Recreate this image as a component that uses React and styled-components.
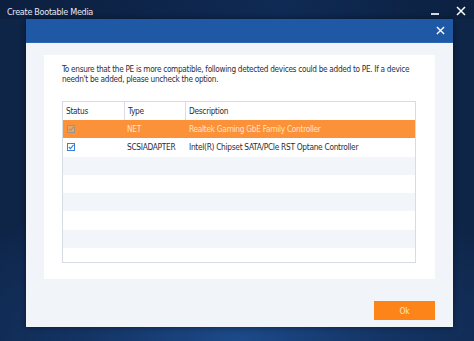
import React from 'react';
import styled, { createGlobalStyle } from 'styled-components';

const GlobalStyle = createGlobalStyle`
  html, body {
    margin: 0;
    padding: 0;
    background: #0e2446;
  }
  body {
    font-family: "DejaVu Sans Condensed", "DejaVu Sans", "Liberation Sans", sans-serif;
    font-stretch: condensed;
    letter-spacing: -0.3px;
  }
`;

const devices = [
  { type: 'NET', desc: 'Realtek Gaming GbE Family Controller', selected: true },
  { type: 'SCSIADAPTER', desc: 'Intel(R) Chipset SATA/PCIe RST Optane Controller' },
];

const EMPTY_ROWS = 6;

function CheckIcon({ muted }) {
  const c = muted ? '#a8927c' : '#3a7fd8';
  return (
    <svg width="8" height="8" viewBox="0 0 8 8">
      <rect x="0.5" y="0.5" width="7" height="7" fill={muted ? '#e9a467' : 'none'} stroke={c} strokeWidth="1" />
      <path d="M1.8 4 L3.4 5.6 L6.6 1.8" fill="none" stroke={c} strokeWidth="1.1" />
    </svg>
  );
}

function CloseIcon({ size = 10 }) {
  return (
    <svg width={size} height={size} viewBox="0 0 10 10">
      <path d="M1 1 L9 9 M9 1 L1 9" stroke="#fff" strokeWidth="1.5" />
    </svg>
  );
}

function App() {
  return (
    <>
      <GlobalStyle />
      <Screen>
        <TitleBar>
          <Title>Create Bootable Media</Title>
          <WinButtons>
            <Minimize />
            <CloseIcon size={10} />
          </WinButtons>
        </TitleBar>
        <Stage>
          <Dialog>
            <DialogHeader>
              <CloseIcon size={9} />
            </DialogHeader>
            <DialogBody>
              <Panel>
                <Notice>
                  To ensure that the PE is more compatible, following detected devices could be added to PE. If a device
                  <br />
                  needn't be added, please uncheck the option.
                </Notice>
                <Table>
                  <HeadRow>
                    <HeadCell>Status</HeadCell>
                    <HeadCell>Type</HeadCell>
                    <HeadCell $last>Description</HeadCell>
                  </HeadRow>
                  {devices.map((d, i) => (
                    <Row key={d.type} $selected={d.selected} $stripe={i % 2 === 0}>
                      <Cell><CheckIcon muted={d.selected} /></Cell>
                      <Cell $pad={2}>{d.type}</Cell>
                      <Cell>{d.desc}</Cell>
                    </Row>
                  ))}
                  {Array.from({ length: EMPTY_ROWS }).map((_, i) => (
                    <Row key={i} $stripe={(i + devices.length) % 2 === 0} />
                  ))}
                  <Row $short />
                </Table>
              </Panel>
              <Footer>
                <OkButton>Ok</OkButton>
              </Footer>
            </DialogBody>
          </Dialog>
        </Stage>
      </Screen>
    </>
  );
}

const Screen = styled.div`
  width: 474px;
  height: 341px;
  display: flex;
  flex-direction: column;
  background: radial-gradient(ellipse 70% 45% at 50% 100%, #1c4a8a 0%, #143464 45%, #0e2548 100%);
  overflow: hidden;
`;

const TitleBar = styled.div`
  height: 19px;
  flex: none;
  display: flex;
  align-items: center;
  justify-content: space-between;
  padding: 0 7px;
  background: linear-gradient(90deg, #0c1f3f 0%, #0f2a54 60%, #0c2040 100%);
`;

const Title = styled.div`
  color: #e6ecf5;
  font-size: 9px;
  margin-top: 4px;
`;

const WinButtons = styled.div`
  display: flex;
  align-items: center;
  gap: 17px;
  padding-right: 1px;
  margin-top: 3px;
`;

const Minimize = styled.div`
  width: 8px;
  height: 1.5px;
  background: #d7dfeb;
  margin-top: 6px;
`;

const Stage = styled.div`
  flex: 1;
  display: flex;
  padding: 0 21px 14px 26px;
  min-width: 0;
`;

const Dialog = styled.div`
  flex: 1;
  min-width: 0;
  display: flex;
  flex-direction: column;
  background: #f1f4f9;
  box-shadow: 0 0 6px rgba(0, 0, 0, 0.45);
`;

const DialogHeader = styled.div`
  height: 24px;
  flex: none;
  display: flex;
  align-items: center;
  justify-content: flex-end;
  padding-right: 8px;
  background: #1f58a4;
  border-bottom: 1px solid #2b66b3;
  box-sizing: border-box;
`;

const DialogBody = styled.div`
  flex: 1;
  display: flex;
  flex-direction: column;
  padding: 12px 18px 7px 18px;
`;

const Panel = styled.div`
  background: #fff;
  height: 224px;
  box-sizing: border-box;
  padding: 10px 19px 0 18px;
  display: flex;
  flex-direction: column;
  overflow: hidden;
`;

const Notice = styled.p`
  margin: 0 0 17px;
  font-size: 8.2px;
  line-height: 9.5px;
  color: #2a2f38;
  white-space: nowrap;
`;

const Table = styled.div`
  border: 1px solid #d7dce4;
  display: flex;
  flex-direction: column;
  height: 162px;
  box-sizing: border-box;
  overflow: hidden;
`;

const columns = 'grid-template-columns: 62px 61px 1fr;';

const HeadRow = styled.div`
  display: grid;
  ${columns}
  height: 18px;
  flex: none;
  background: #fff;
`;

const HeadCell = styled.div`
  display: flex;
  align-items: center;
  padding-left: 3px;
  font-size: 8.3px;
  color: #2a2f38;
  border-right: ${(p) => (p.$last ? 'none' : '1px solid #d9dee6')};
`;

const Row = styled.div`
  display: grid;
  ${columns}
  height: ${(p) => (p.$short ? '15px' : '18.3px')};
  flex: none;
  background: ${(p) => (p.$selected ? '#fb9139' : p.$stripe ? '#f2f5fa' : '#fff')};
  color: ${(p) => (p.$selected ? '#ffe3c4' : '#2a2f38')};
`;

const Cell = styled.div`
  display: flex;
  align-items: center;
  padding-left: ${(p) => p.$pad ?? 3}px;
  font-size: 8.3px;
  white-space: nowrap;
  svg {
    margin-left: 1px;
  }
`;

const Footer = styled.div`
  display: flex;
  justify-content: flex-end;
  margin-top: 22px;
`;

const OkButton = styled.button`
  width: 61px;
  height: 19px;
  border: none;
  background: #fd8419;
  color: #fde2c6;
  font-family: inherit;
  font-stretch: inherit;
  letter-spacing: inherit;
  font-size: 8.5px;
  padding: 0;
  cursor: pointer;
`;

export default App;
